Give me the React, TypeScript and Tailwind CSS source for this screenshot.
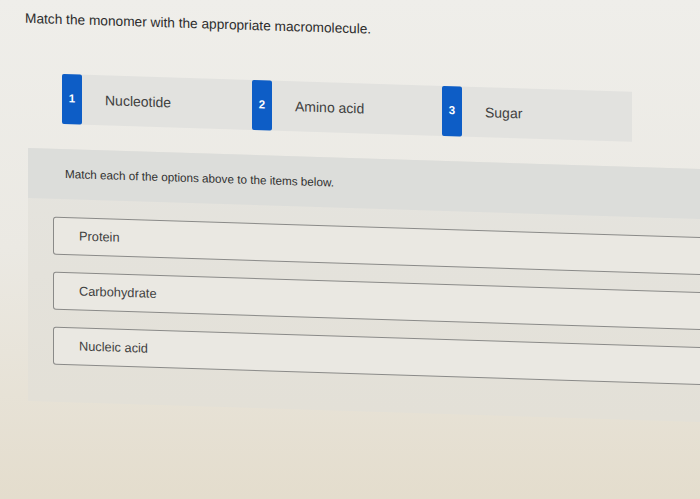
import React from "react";

const choices = [
  { n: 1, label: "Nucleotide" },
  { n: 2, label: "Amino acid" },
  { n: 3, label: "Sugar" },
];

const targets = ["Protein", "Carbohydrate", "Nucleic acid"];

export default function App() {
  return (
    <div className="w-[700px] h-[499px] overflow-hidden bg-linear-to-b from-[#efeeea] via-[#ebe9e3] to-[#e4ddcd] font-['Liberation_Sans','Open_Sans',sans-serif]">
      <div className="w-[780px] origin-top-left skew-y-[1.8deg]">
        <p className="pl-[25px] pt-[10px] text-[13.7px] leading-[16px] text-[#2c2c2c]">
          Match the monomer with the appropriate macromolecule.
        </p>

        <div className="mt-[46px] flex pl-[62px]">
          {choices.map((c) => (
            <div key={c.n} className="flex h-[50px] w-[190px] items-center bg-[#e2e2df]">
              <div className="flex h-full w-[20px] items-center justify-center rounded-[2px] bg-[#0d5dc6] text-[11.5px] font-bold text-white">
                {c.n}
              </div>
              <span className="pl-[23px] text-[14px] text-[#404040]">{c.label}</span>
            </div>
          ))}
        </div>

        <div className="ml-[28px] mt-[25px] bg-linear-to-b from-[#e5e4df] to-[#e3e0d7]">
          <div className="flex h-[50px] items-center bg-[#dcddda] pl-[37px] text-[11.7px] text-[#303030]">
            Match each of the options above to the items below.
          </div>
          <div className="flex flex-col gap-[17px] pb-[37px] pl-[25px] pt-[18px]">
            {targets.map((t) => (
              <div
                key={t}
                className="flex h-[38px] items-center rounded-[3px] border border-[#8a8a88] bg-[#eae8e2] pl-[25px] text-[12.8px] text-[#404040]"
              >
                {t}
              </div>
            ))}
          </div>
        </div>
      </div>
    </div>
  );
}
